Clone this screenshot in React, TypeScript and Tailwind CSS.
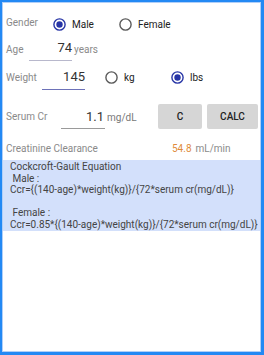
import React from 'react'

const font = { fontFamily: 'Roboto, "Noto Sans", sans-serif' }

function Radio({ checked, label, className }: { checked: boolean; label: string; className?: string }) {
    return (
        <div className={`flex items-center ${className ?? ''}`}>
            <svg width="13" height="13" viewBox="0 0 13 13" className="shrink-0">
                <circle cx="6.5" cy="6.5" r="5.6" fill="none" stroke={checked ? '#2735a6' : '#5a5a5a'} strokeWidth="1.4" />
                {checked && <circle cx="6.5" cy="6.5" r="3.2" fill="#2735a6" />}
            </svg>
            <span className="ml-[6px] text-[10px] text-[#222]">{label}</span>
        </div>
    )
}

export default function App() {
    return (
        <div style={font} className="w-[264px] h-[355px] border-l-2 border-t-2 border-r-[3px] border-b-[3px] border-[#2389f4] bg-white">
            <div className="h-full border border-[#b0cff8] flex flex-col">
                {/* gender */}
                <div className="mt-[9px] h-[24px] flex items-center pl-[3px]">
                    <span className="w-[47px] self-start mt-[3px] text-[10px] text-[#8a8a8a]">Gender</span>
                    <Radio checked label="Male" className="w-[66px]" />
                    <Radio checked={false} label="Female" />
                </div>

                {/* age */}
                <div className="h-[26px] flex items-center pl-[3px]">
                    <span className="w-[23px] text-[10px] text-[#8a8a8a]">Age</span>
                    <div className="w-[43px] h-[25px] self-start border-b border-[#b8b8cc] flex items-center justify-end text-[13px] text-[#333]">74</div>
                    <span className="ml-[2px] text-[10px] text-[#8a8a8a]">years</span>
                </div>

                {/* weight */}
                <div className="mt-[2px] h-[26px] flex items-center pl-[3px]">
                    <span className="w-[36px] text-[10px] text-[#8a8a8a]">Weight</span>
                    <div className="w-[43px] h-[26px] border-b border-[#6d72b8] flex items-center justify-end text-[13px] text-[#333]">145</div>
                    <Radio checked={false} label="kg" className="ml-[20px] w-[66px]" />
                    <Radio checked label="lbs" />
                </div>

                {/* serum cr */}
                <div className="mt-[13px] h-[27px] flex items-center pl-[3px] pr-[2px]">
                    <span className="w-[55px] text-[10px] text-[#8a8a8a]">Serum Cr</span>
                    <div className="w-[44px] h-[26px] self-start border-b border-[#9a9a9a] flex items-center justify-end pr-[1px] pt-[2px] text-[13px] text-[#333]">1.1</div>
                    <span className="ml-[2px] mt-[2px] text-[10px] text-[#777]">mg/dL</span>
                    <button className="ml-auto w-[44px] h-[25px] rounded-[2px] bg-[#d6d6d6] text-[10px] font-medium text-[#222]">C</button>
                    <button className="ml-[5px] w-[51px] h-[25px] rounded-[2px] bg-[#d6d6d6] text-[10px] font-medium text-[#222]">CALC</button>
                </div>

                {/* result */}
                <div className="mt-[10px] h-[16px] flex items-center pl-[3px]">
                    <span className="w-[166px] text-[10px] text-[#8a8a8a]">Creatinine Clearance</span>
                    <span className="text-[10px] text-[#e08b3a]">54.8</span>
                    <span className="ml-[4px] text-[10px] text-[#8a8a8a]">mL/min</span>
                </div>

                {/* equation */}
                <div className="mt-[4px] bg-[#d3e0fb] pt-[1px] pb-[1px] px-[7px] text-[10px] leading-[11.5px] text-[#444] whitespace-pre">
                    {'Cockcroft-Gault Equation\n Male :\nCcr={(140-age)*weight(kg)}/{72*serum cr(mg/dL)}\n\n Female :\nCcr=0.85*{(140-age)*weight(kg)}/{72*serum cr(mg/dL)}'}
                </div>
            </div>
        </div>
    )
}
